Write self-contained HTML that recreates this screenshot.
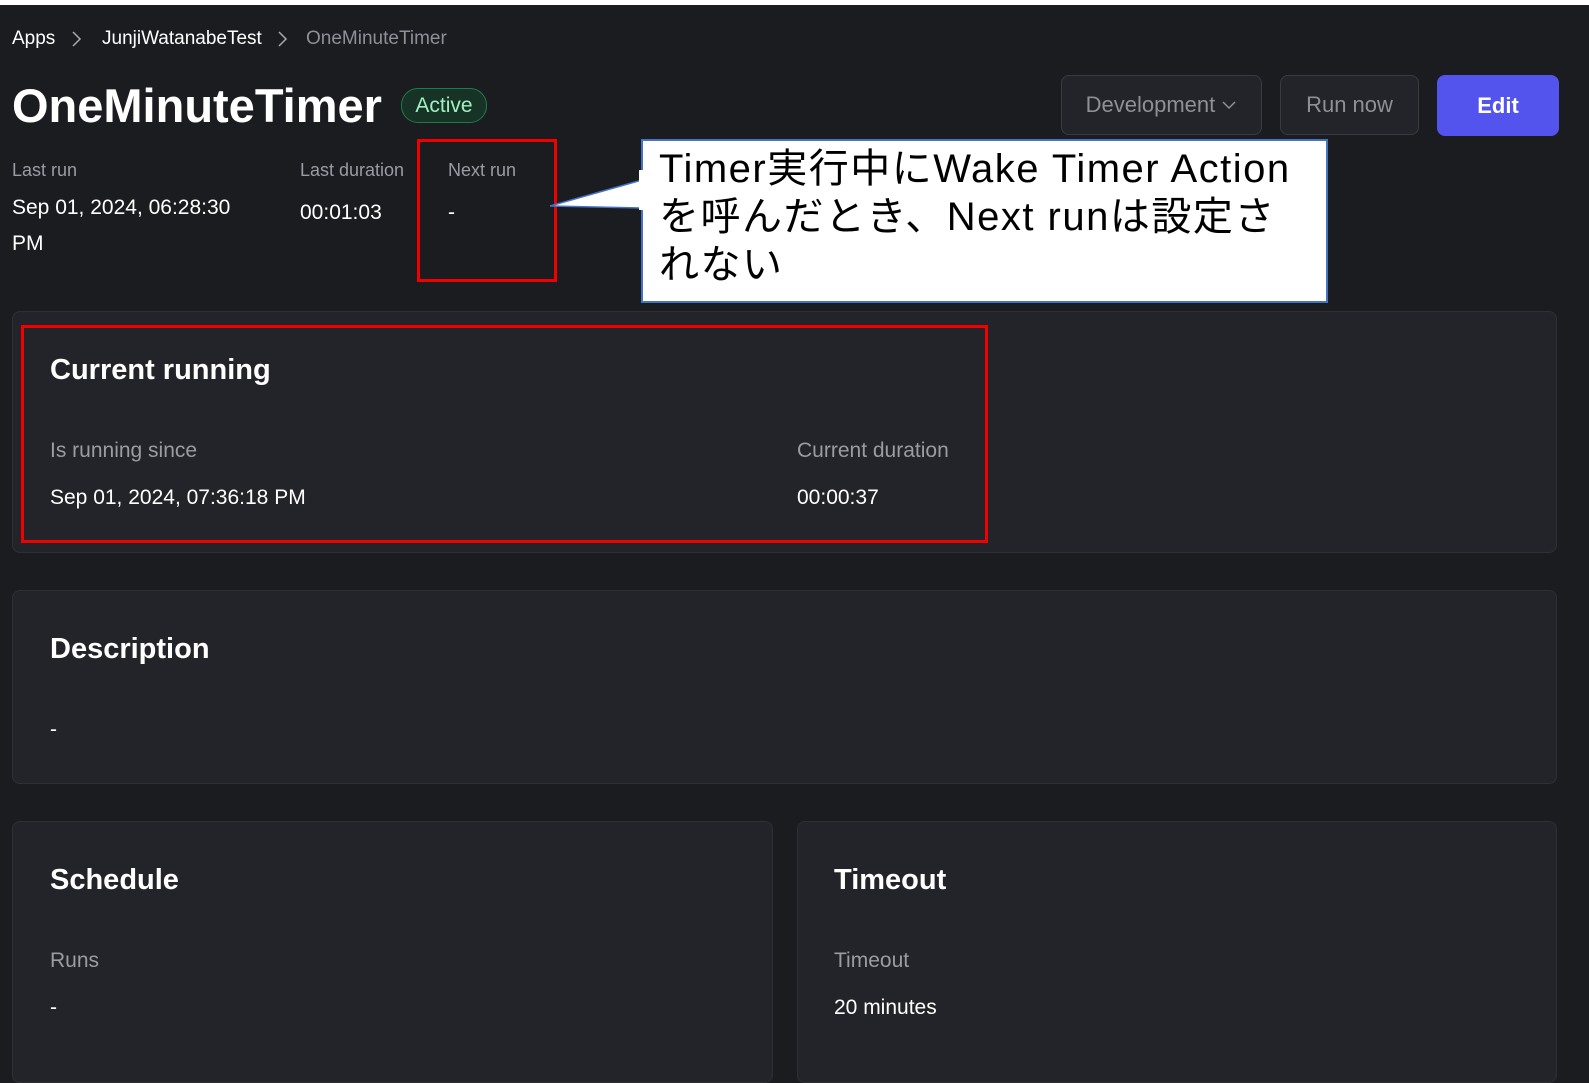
<!DOCTYPE html>
<html><head><meta charset="utf-8"><style>
body{margin:0;width:1589px;height:1073px;overflow:hidden;background:#1b1c20;font-family:"Liberation Sans","Noto Sans CJK JP",sans-serif;color:#fff;position:relative}
.top{position:absolute;left:0;top:0;width:1589px;height:5px;background:#fff}
.a{position:absolute;white-space:nowrap}
.card{position:absolute;background:#232429;border:1px solid #2f3036;border-radius:8px}
.lbl{color:#9a9ca3;font-size:19px}
.val{color:#fff;font-size:19px}
.h{font-size:29px;font-weight:bold}
.btn{position:absolute;border:1px solid #3a3b41;border-radius:8px;background:#232429;color:#8e9097;font-size:22px;display:flex;align-items:center;justify-content:center}
.red{position:absolute;border:3px solid #f00000;box-sizing:border-box}
.chev{position:absolute;top:30px}
</style></head><body>
<div class="top"></div>
<div class="a" style="left:12px;top:28px;font-size:19px">Apps</div>
<svg class="chev" style="left:70px" width="12" height="18"><path d="M3 2l7 7-7 7" fill="none" stroke="#aaa" stroke-width="1.5"/></svg>
<div class="a" style="left:102px;top:28px;font-size:19px">JunjiWatanabeTest</div>
<svg class="chev" style="left:276px" width="12" height="18"><path d="M3 2l7 7-7 7" fill="none" stroke="#aaa" stroke-width="1.5"/></svg>
<div class="a" style="left:306px;top:28px;font-size:19px;color:#8e9097">OneMinuteTimer</div>
<div class="a" style="left:12px;top:78px;font-size:47px;font-weight:bold">OneMinuteTimer</div>
<div class="a" style="left:401px;top:88px;width:84px;height:33px;border:1px solid #1f7a4a;background:#173325;border-radius:17px;color:#9ff0c0;font-size:21px;text-align:center;line-height:33px">Active</div>
<div class="btn" style="left:1061px;top:75px;width:199px;height:58px">Development&nbsp;<svg width="16" height="10" viewBox="0 0 16 10"><path d="M2 2l6 6 6-6" fill="none" stroke="#8e9097" stroke-width="1.5"/></svg></div>
<div class="btn" style="left:1280px;top:75px;width:137px;height:58px">Run now</div>
<div class="btn" style="left:1437px;top:75px;width:120px;height:59px;background:#5353ee;border-color:#5353ee;color:#fff;font-weight:bold">Edit</div>
<div class="a lbl" style="left:12px;top:160px;font-size:18px">Last run</div>
<div class="a val" style="left:12px;top:190px;font-size:21px;line-height:36px;white-space:normal;width:240px">Sep 01, 2024, 06:28:30 PM</div>
<div class="a lbl" style="left:300px;top:160px;font-size:18px">Last duration</div>
<div class="a val" style="left:300px;top:201px;font-size:21px">00:01:03</div>
<div class="a lbl" style="left:448px;top:160px;font-size:18px">Next run</div>
<div class="a val" style="left:448px;top:201px;font-size:21px">-</div>
<div class="red" style="left:417px;top:139px;width:140px;height:143px"></div>
<svg class="a" style="left:545px;top:170px" width="100" height="45"><polygon points="5,36 97,10 97,38" fill="#fff" stroke="#4472c4" stroke-width="1.5"/></svg>
<div class="a" style="left:641px;top:139px;width:687px;height:164px;background:#fff;border:2px solid #4472c4;box-sizing:border-box"></div>
<svg class="a" style="left:639px;top:170px" width="6" height="40"><rect x="0" y="0" width="6" height="40" fill="#fff"/></svg>
<div class="a" style="left:659px;top:145px;color:#000;font-size:40px;line-height:48px;letter-spacing:1.5px">Timer実行中にWake Timer Action<br>を呼んだとき、Next runは設定さ<br>れない</div>
<div class="card" style="left:12px;top:311px;width:1543px;height:240px"></div>
<div class="a h" style="left:50px;top:354px">Current running</div>
<div class="a lbl" style="left:50px;top:439px;font-size:21px">Is running since</div>
<div class="a val" style="left:50px;top:486px;font-size:21px">Sep 01, 2024, 07:36:18 PM</div>
<div class="a lbl" style="left:797px;top:439px;font-size:21px">Current duration</div>
<div class="a val" style="left:797px;top:486px;font-size:21px">00:00:37</div>
<div class="red" style="left:21px;top:325px;width:967px;height:218px"></div>
<div class="card" style="left:12px;top:590px;width:1543px;height:192px"></div>
<div class="a h" style="left:50px;top:633px">Description</div>
<div class="a val" style="left:50px;top:718px;font-size:21px">-</div>
<div class="card" style="left:12px;top:821px;width:759px;height:260px"></div>
<div class="a h" style="left:50px;top:864px">Schedule</div>
<div class="a lbl" style="left:50px;top:949px;font-size:21px">Runs</div>
<div class="a val" style="left:50px;top:996px;font-size:21px">-</div>
<div class="card" style="left:797px;top:821px;width:758px;height:260px"></div>
<div class="a h" style="left:834px;top:864px">Timeout</div>
<div class="a lbl" style="left:834px;top:949px;font-size:21px">Timeout</div>
<div class="a val" style="left:834px;top:996px;font-size:21px">20 minutes</div>
</body></html>
